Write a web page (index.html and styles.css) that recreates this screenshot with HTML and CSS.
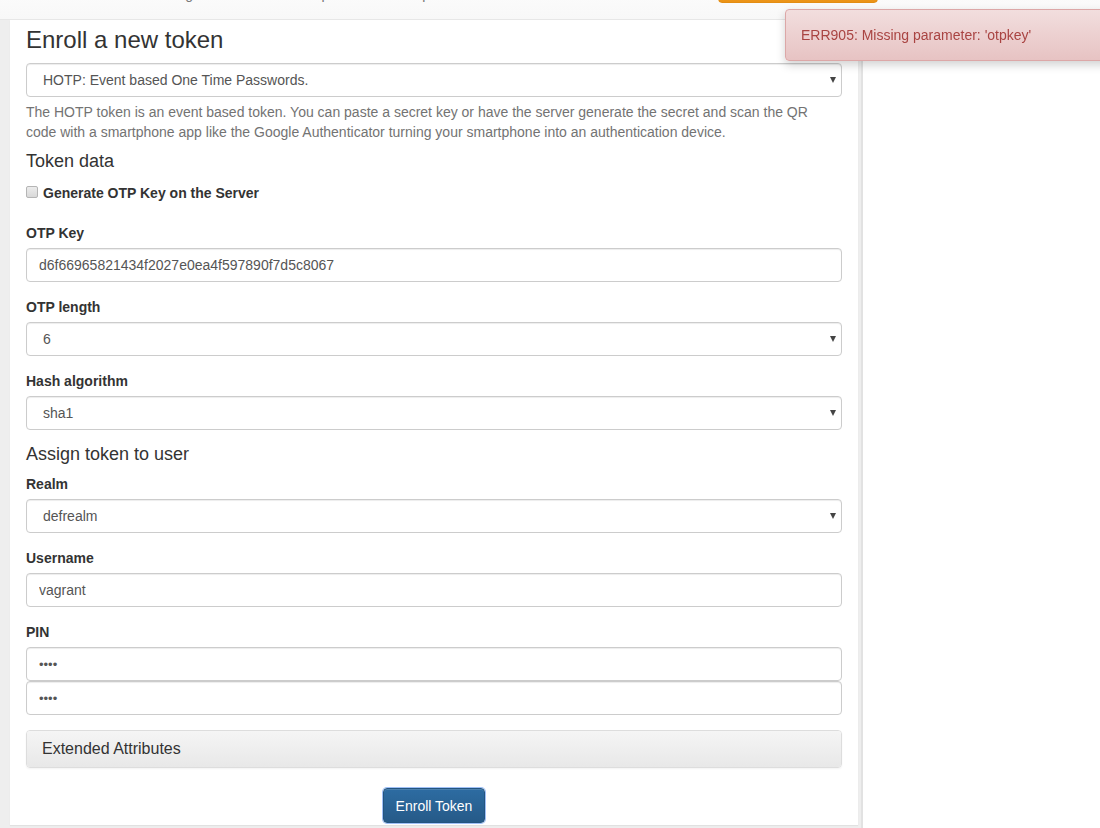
FILE: index.html
```html
<!DOCTYPE html>
<html>
<head>
<meta charset="utf-8">
<link rel="stylesheet" href="styles.css">
</head>
<body>
<div class="navbar">
  <ul class="nav">
    <li>Tokens</li>
    <li>Settings</li>
    <li>Audit</li>
    <li>Components</li>
    <li>Help</li>
  </ul>
  <div class="nav-spacer"></div>
  <div class="nav-btn">Logout</div>
  <div class="nav-right"></div>
</div>
<div class="main">
  <div class="leftcol">
    <div class="panel">
      <h3 class="title">Enroll a new token</h3>
      <div class="select-wrap">
        <select class="form-control"><option>HOTP: Event based One Time Passwords.</option></select>
      </div>
      <p class="help-block">The HOTP token is an event based token. You can paste a secret key or have the server generate the secret and scan the QR code with a smartphone app like the Google Authenticator turning your smartphone into an authentication device.</p>
      <h4 class="subtitle">Token data</h4>
      <div class="checkbox">
        <label><input type="checkbox"><span>Generate OTP Key on the Server</span></label>
      </div>
      <div class="form-group">
        <label class="control-label">OTP Key</label>
        <input class="form-control" type="text" value="d6f66965821434f2027e0ea4f597890f7d5c8067">
      </div>
      <div class="form-group">
        <label class="control-label">OTP length</label>
        <div class="select-wrap"><select class="form-control"><option>6</option></select></div>
      </div>
      <div class="form-group">
        <label class="control-label">Hash algorithm</label>
        <div class="select-wrap"><select class="form-control"><option>sha1</option></select></div>
      </div>
      <h4 class="subtitle subtitle-user">Assign token to user</h4>
      <div class="form-group">
        <label class="control-label">Realm</label>
        <div class="select-wrap"><select class="form-control"><option>defrealm</option></select></div>
      </div>
      <div class="form-group">
        <label class="control-label">Username</label>
        <input class="form-control" type="text" value="vagrant">
      </div>
      <div class="form-group">
        <label class="control-label">PIN</label>
        <input class="form-control" type="password" value="1234">
        <input class="form-control" type="password" value="1234">
      </div>
      <div class="ext-panel">
        <div class="ext-heading">Extended Attributes</div>
      </div>
      <div class="actions">
        <button class="btn-primary" type="button">Enroll Token</button>
      </div>
    </div>
  </div>
  <div class="rightcol"></div>
</div>
<div class="toast">ERR905: Missing parameter: 'otpkey'</div>
</body>
</html>
```
FILE: styles.css
```css
* { box-sizing: border-box; }
html, body { margin: 0; padding: 0; }
body {
  font-family: "Liberation Sans", Arial, Helvetica, sans-serif;
  font-size: 14px;
  line-height: 20px;
  color: #333;
  background: #fff;
  overflow: hidden;
  height: 828px;
}
.navbar {
  height: 51px;
  margin-top: -31px;
  background: linear-gradient(#ffffff, #f8f8f8);
  border-bottom: 1px solid #e7e7e7;
  display: flex;
  align-items: flex-start;
  box-shadow: 0 1px 3px rgba(0,0,0,.04);
}
.nav {
  list-style: none;
  margin: 0;
  padding: 0 0 0 60px;
  display: flex;
}
.nav li {
  padding: 15px 15px;
  color: #777;
  line-height: 20px;
}
.nav-spacer { flex: 1; }
.nav-btn {
  width: 160px;
  height: 34px;
  border-radius: 4px;
  background: linear-gradient(#f0ad4e, #eb9316);
  border: 1px solid #e38d13;
  color: #fff;
  text-align: center;
  line-height: 32px;
}
.nav-right { width: 222px; }
.main {
  display: flex;
  align-items: stretch;
  height: 808px;
}
.leftcol {
  width: 863px;
  flex: none;
  background: #eeeeee;
  padding: 0 3px 0 10px;
  border-right: 2px solid #e2e2e2;
}
.rightcol { flex: 1; background: #fff; }
.panel {
  background: #fff;
  padding: 0 16px 2px 16px;
  box-shadow: 0 1px 1px rgba(0,0,0,.05);
}
.title {
  font-size: 24px;
  font-weight: 500;
  line-height: 26.4px;
  margin: 0 0 10px;
  padding-top: 7px;
}
.subtitle {
  font-size: 18px;
  font-weight: 500;
  line-height: 19.8px;
  margin: 10px 0 10px;
}
.subtitle.subtitle-user { margin-bottom: 9px; }
.select-wrap { position: relative; }
.select-wrap::after {
  content: "";
  position: absolute;
  right: 6px;
  top: 14px;
  border-left: 3.5px solid transparent;
  border-right: 3.5px solid transparent;
  border-top: 6px solid #444;
  pointer-events: none;
}
.form-control {
  display: block;
  width: 100%;
  height: 34px;
  padding: 6px 12px;
  font-family: inherit;
  font-size: 14px;
  line-height: 20px;
  color: #555;
  background: #fff;
  border: 1px solid #ccc;
  border-radius: 4px;
  box-shadow: inset 0 1px 1px rgba(0,0,0,.075);
  margin: 0;
}
select.form-control {
  -webkit-appearance: none;
  appearance: none;
  padding-left: 16px;
}
input[type=password].form-control { color: #555; font-size: 13px; }
.help-block {
  margin: 5px 0 10px;
  color: #737373;
  line-height: 20px;
}
.checkbox { margin: 0 0 20px; padding-top: 1px; }
.checkbox label {
  display: flex;
  align-items: flex-start;
  font-weight: bold;
  line-height: 20px;
}
.checkbox input {
  -webkit-appearance: none;
  appearance: none;
  margin: 3px 5px 0 0;
  width: 12px;
  height: 12px;
  border: 1px solid #b5b5b5;
  border-radius: 2px;
  background: linear-gradient(#ececec, #d9d9d9);
}
.form-group { margin-bottom: 15px; }
.control-label {
  display: block;
  font-weight: bold;
  margin-bottom: 5px;
  line-height: 20px;
}
.ext-panel {
  border: 1px solid #dddddd;
  border-radius: 4px;
  box-shadow: 0 1px 2px rgba(0,0,0,.05);
  margin-bottom: 20px;
}
.ext-heading {
  background: linear-gradient(#f5f5f5, #e8e8e8);
  padding: 10px 15px;
  font-size: 16px;
  line-height: 16px;
  height: 36px;
  color: #333;
  border-radius: 3px;
}
.actions { display: flex; justify-content: center; }
.btn-primary {
  font-family: inherit;
  font-size: 14px;
  line-height: 20px;
  padding: 6px 12px;
  height: 35px;
  color: #fff;
  background: linear-gradient(#2d6ca2, #265a88);
  border: 1px solid #245580;
  border-radius: 4px;
  box-shadow: 0 0 0 1px rgba(80,140,240,.55), inset 0 1px 0 rgba(255,255,255,.15);
  cursor: pointer;
}
.toast {
  position: fixed;
  top: 9px;
  left: 785px;
  width: 340px;
  padding: 15px 15px;
  line-height: 20px;
  color: #a94442;
  background: linear-gradient(#f2dede, #e7c3c3);
  border: 1px solid #dca7a7;
  border-radius: 4px;
  box-shadow: 0 4px 10px rgba(0,0,0,.18);
}
```
